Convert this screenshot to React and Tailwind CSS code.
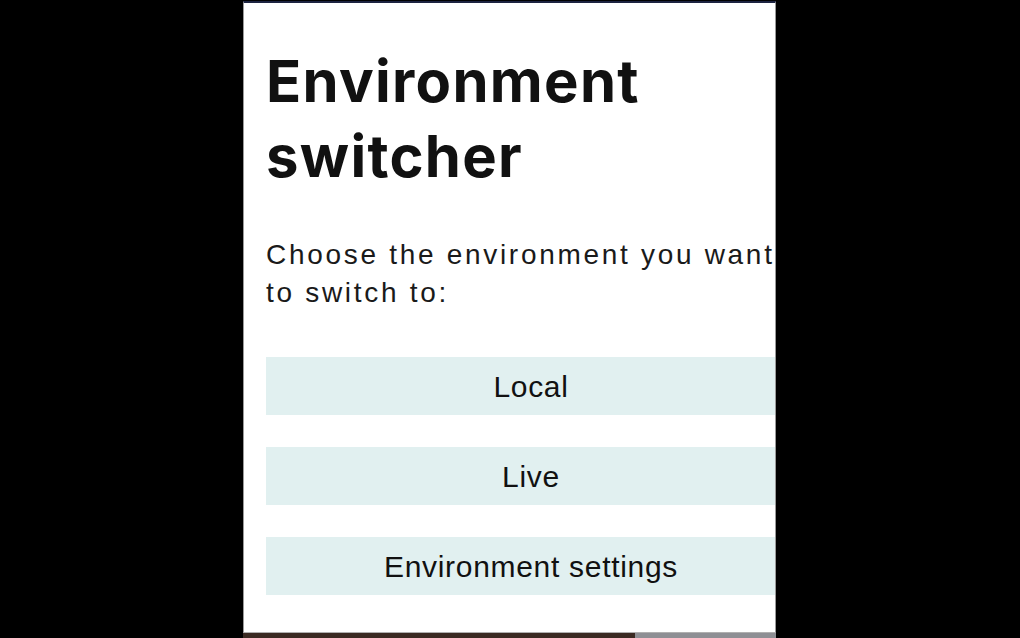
export default function App() {
  const envs = ["Local", "Live", "Environment settings"];

  return (
    <div className="w-[1020px] h-[638px] bg-black overflow-hidden flex">
      <div className="ml-[243px] w-[533px] flex flex-col">
        {/* popup */}
        <div className="mt-[1px] h-[632px] shrink-0 bg-white border-t-2 border-t-[#1c2340] border-x border-x-[#9a9a9a] border-b border-b-[#b0b0b0] overflow-hidden">
          <div className="w-[530px] ml-[22px] pt-[41px]">
            <h1 className="font-['Inter',sans-serif] font-bold text-[58px] leading-[75px] text-[#111] tracking-[1.3px]">
              Environment
              <br />
              switcher
            </h1>
            <p className="mt-[42px] w-[515px] font-['Liberation_Sans',Arial,sans-serif] text-[28px] leading-[38px] tracking-[2.7px] text-[#1a1a1a]">
              Choose the environment you want to switch to:
            </p>
            <div className="mt-[45px] flex flex-col gap-[32px]">
              {envs.map((e) => (
                <button
                  key={e}
                  className="h-[58px] w-full bg-[#e1f0f0] flex items-center justify-center font-['Liberation_Sans',Arial,sans-serif] text-[30px] tracking-[0.7px] text-[#111]"
                >
                  {e}
                </button>
              ))}
            </div>
          </div>
        </div>
        {/* desktop peeking below */}
        <div className="flex-1 flex">
          <div className="w-[392px] bg-[#3b2a22]"></div>
          <div className="flex-1 bg-[#8e8f94]"></div>
        </div>
      </div>
    </div>
  );
}
